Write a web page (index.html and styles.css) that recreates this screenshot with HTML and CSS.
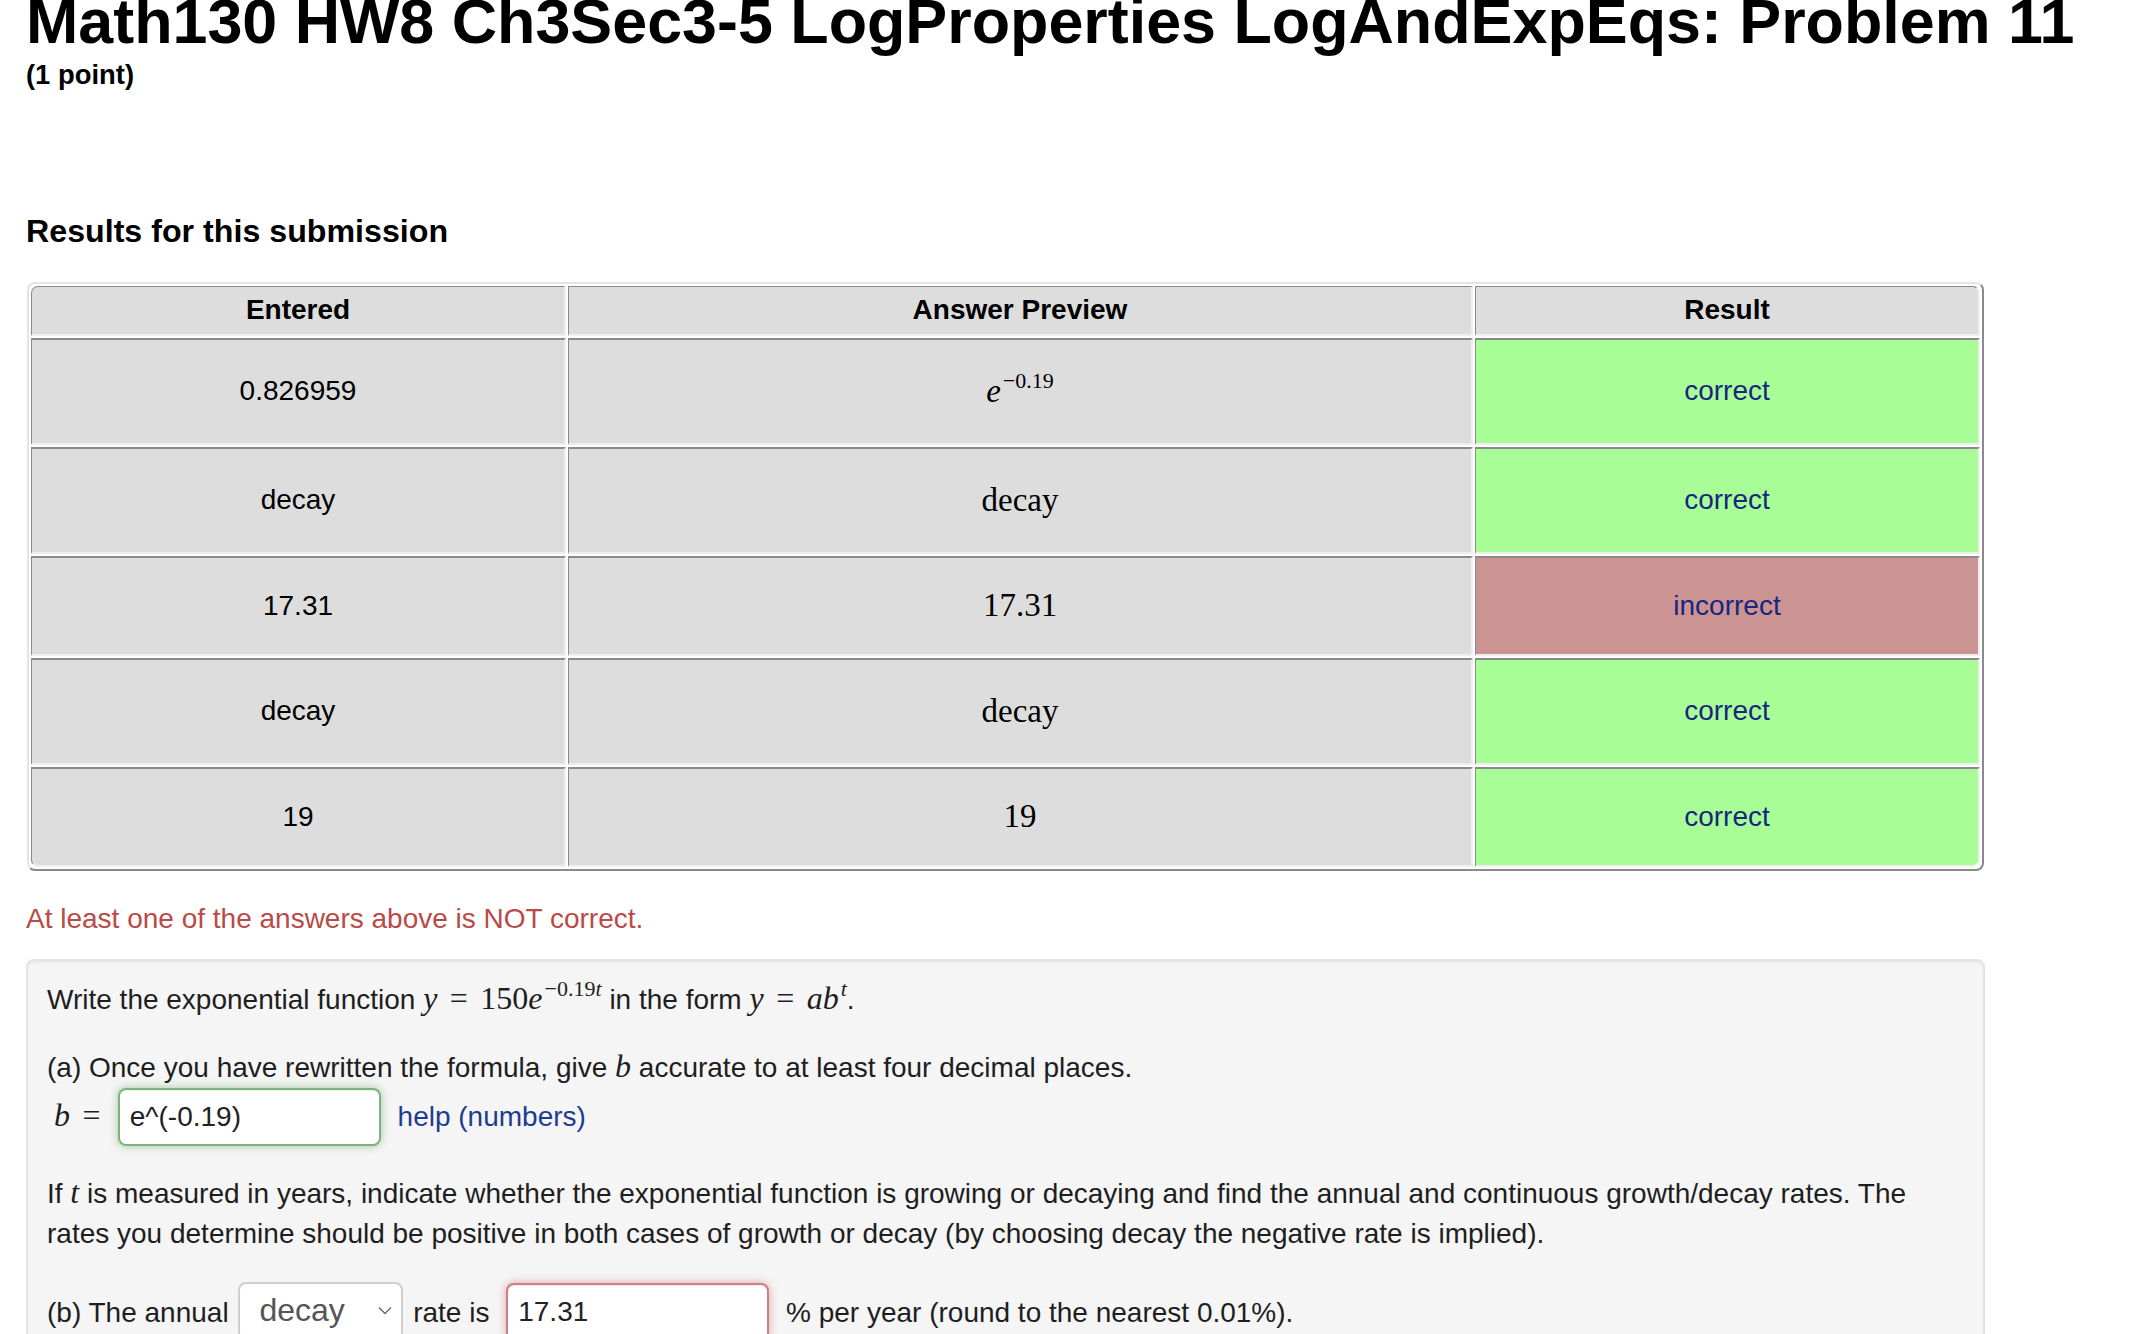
FILE: index.html
```html
<!DOCTYPE html>
<html lang="en">
<head>
<meta charset="utf-8">
<title>Math130 HW8 Ch3Sec3-5 LogProperties LogAndExpEqs: Problem 11</title>
<link rel="stylesheet" href="styles.css">
</head>
<body>
<div class="page">
  <h1 class="title">Math130 HW8 Ch3Sec3-5 LogProperties LogAndExpEqs: Problem 11</h1>
  <div class="points">(1 point)</div>
  <h3 class="results-heading">Results for this submission</h3>
  <table class="attempt">
    <thead>
      <tr><th class="col-entered">Entered</th><th class="col-preview">Answer Preview</th><th class="col-result">Result</th></tr>
    </thead>
    <tbody>
      <tr class="tall">
        <td>0.826959</td>
        <td class="preview"><i class="mi">e</i><span class="tsup">−0.19</span></td>
        <td class="ok">correct</td>
      </tr>
      <tr class="tall">
        <td>decay</td>
        <td class="preview">decay</td>
        <td class="ok">correct</td>
      </tr>
      <tr class="short">
        <td>17.31</td>
        <td class="preview">17.31</td>
        <td class="bad">incorrect</td>
      </tr>
      <tr class="tall">
        <td>decay</td>
        <td class="preview">decay</td>
        <td class="ok">correct</td>
      </tr>
      <tr class="short last">
        <td>19</td>
        <td class="preview">19</td>
        <td class="ok">correct</td>
      </tr>
    </tbody>
  </table>
  <div class="message">At least one of the answers above is NOT correct.</div>
  <div class="problem">
    <p>Write the exponential function <span class="math"><i>y</i><span class="mo">=</span>150<i>e</i><span class="sup">−0.19<i>t</i></span></span> in the form <span class="math"><i>y</i><span class="mo">=</span><i>ab</i><span class="sup"><i>t</i></span></span>.</p>
    <p>(a) Once you have rewritten the formula, give <span class="math"><i>b</i></span> accurate to at least four decimal places.<br><span class="math lead"><i>b</i><span class="mo mo-end">=</span></span> <input class="ans correct first" type="text" value="e^(-0.19)"> <a class="help" href="#">help (numbers)</a></p>
    <p>If <span class="math"><i>t</i></span> is measured in years, indicate whether the exponential function is growing or decaying and find the annual and continuous growth/decay rates. The rates you determine should be positive in both cases of growth or decay (by choosing decay the negative rate is implied).</p>
    <p>(b) The annual <span class="select"><span class="select-text">decay</span><svg class="chev" width="14" height="9" viewBox="0 0 14 9"><polyline points="1,1.5 7,7.5 13,1.5" fill="none" stroke="#6a6a6a" stroke-width="1.4"/></svg></span> rate is <input class="ans incorrect" type="text" value="17.31"> % per year (round to the nearest 0.01%).</p>
  </div>
</div>
</body>
</html>
```

FILE: styles.css
```css
* { box-sizing: border-box; }
html, body { margin: 0; padding: 0; background: #fff; }
body {
  font-family: "Liberation Sans", Arial, Helvetica, sans-serif;
  color: #000;
  width: 2150px;
  height: 1334px;
  overflow: hidden;
}
.page { padding-left: 26px; }

.title {
  margin: -10px 0 0;
  font-size: 62.8px;
  line-height: 62.6px;
  font-weight: bold;
  white-space: nowrap;
}
.points {
  margin-top: 2px;
  font-size: 27.4px;
  line-height: 40px;
  font-weight: bold;
}
.results-heading {
  margin: 116px 0 0;
  font-size: 32.2px;
  line-height: 40px;
  font-weight: bold;
}

.attempt {
  margin: 31px 0 0 1px;
  width: 1957px;
  table-layout: fixed;
  border-collapse: separate;
  border-spacing: 2px;
  border-style: solid;
  border-width: 2px;
  border-color: #e4e4e4 #8a8a8a #8a8a8a #e4e4e4;
  border-radius: 8px;
}
.attempt th, .attempt td {
  padding: 0;
  text-align: center;
  vertical-align: middle;
  background: #dddddd;
  border-style: solid;
  border-width: 2px 2px 2px 1px;
  border-color: #8a8a8a #efefef #efefef #8a8a8a;
  font-size: 28px;
  color: #000;
}
.attempt th {
  height: 50px;
  font-weight: bold;
  border-top-width: 1px;
}
.attempt th.col-entered { width: 535px; border-top-left-radius: 7px; }
.attempt th.col-preview { width: 905px; }
.attempt th.col-result { width: 505px; border-top-right-radius: 7px; }
.attempt tr.tall td { height: 107px; }
.attempt tr.short td { height: 100px; }
.attempt tr.last td:first-child { border-bottom-left-radius: 7px; }
.attempt tr.last td:last-child { border-bottom-right-radius: 7px; }

.attempt td.preview {
  font-family: "Liberation Serif", "Times New Roman", serif;
  font-size: 33px;
}
.attempt td.preview .mi { font-style: italic; }
.attempt td.preview .tsup {
  font-size: 22px;
  vertical-align: 14px;
  line-height: 0;
  margin-left: 2px;
}
.attempt td.ok { background: #a8fd96; color: #16267f; }
.attempt td.bad { background: #cc9393; color: #16267f; }

.message {
  margin-top: 28px;
  font-size: 28px;
  line-height: 40px;
  color: #b94a48;
}

.problem {
  margin-top: 20px;
  width: 1959px;
  min-height: 500px;
  padding: 19px;
  background: #f5f5f5;
  border: 2px solid #e3e3e3;
  border-radius: 8px;
  box-shadow: inset 0 2px 2px rgba(0, 0, 0, 0.05);
  color: #1e1e1e;
}
.problem p {
  margin: 0 0 28px;
  font-size: 28px;
  line-height: 40px;
}

.math {
  font-family: "Liberation Serif", "Times New Roman", serif;
  font-size: 32px;
  line-height: 1;
}
.math i { font-style: italic; }
.math .mo {
  display: inline-block;
  width: 25px;
  text-align: center;
  margin: 0 9px;
  line-height: 1;
}
.math .mo-end { margin-right: 0; }
.math.lead { margin-left: 7px; }
.math .sup {
  font-size: 22px;
  vertical-align: 13px;
  line-height: 0;
  margin-left: 2px;
}

.ans {
  font-family: "Liberation Sans", Arial, Helvetica, sans-serif;
  font-size: 28px;
  color: #222;
  width: 263px;
  height: 58px;
  padding: 0 10px;
  margin: 0 9px;
  border: 2px solid #ccc;
  border-radius: 8px;
  background: #fff;
  vertical-align: baseline;
  outline: none;
}
.ans.first { margin-left: 6px; }
.ans.correct {
  border-color: rgba(81, 153, 81, 0.75);
  box-shadow: inset 0 1px 1px rgba(0, 0, 0, 0.075), 0 0 8px rgba(81, 153, 81, 0.5);
}
.ans.incorrect {
  border-color: rgba(191, 84, 84, 0.75);
  box-shadow: inset 0 1px 1px rgba(0, 0, 0, 0.075), 0 0 8px rgba(191, 84, 84, 0.5);
}

.help {
  color: #1d3c91;
  text-decoration: none;
}

.select {
  display: inline-flex;
  align-items: center;
  justify-content: space-between;
  width: 165px;
  height: 58px;
  margin: 0 2px;
  padding: 0 9px 0 19px;
  border: 2px solid #cfcfcf;
  border-radius: 8px;
  background: #fff;
  font-size: 32px;
  color: #555;
  vertical-align: baseline;
}
.select-text { line-height: normal; }
.chev { display: block; }
```
